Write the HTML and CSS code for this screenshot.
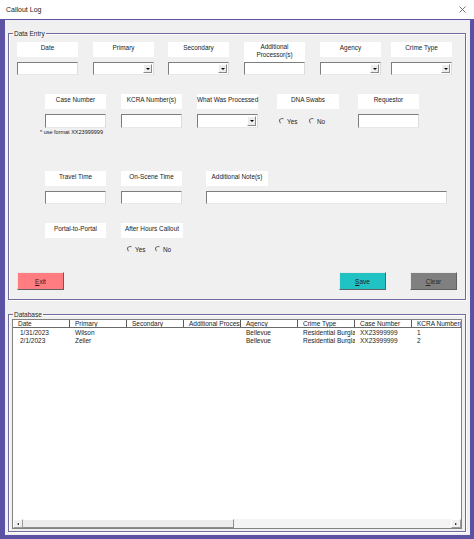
FILE: index.html
```html
<!DOCTYPE html>
<html lang="en">
<head>
<meta charset="utf-8">
<title>Callout Log</title>
<link rel="stylesheet" href="styles.css">
</head>
<body>
<div class="window">
  <div class="titlebar">
    <span class="title">Callout Log</span>
    <svg class="close" width="7" height="7" viewBox="0 0 7 7"><path d="M0.5 0.5L6.5 6.5M6.5 0.5L0.5 6.5" stroke="#555" stroke-width="0.8" fill="none"/></svg>
  </div>
  <div class="client">
    <fieldset class="frame entry">
      <legend>Data Entry</legend>

      <div class="row row1">
        <div class="field"><div class="lbl">Date</div><div class="txt"></div></div>
        <div class="field"><div class="lbl">Primary</div><div class="combo"><span class="drop"></span></div></div>
        <div class="field shift-l1"><div class="lbl">Secondary</div><div class="combo"><span class="drop"></span></div></div>
        <div class="field"><div class="lbl lbl2">Additional<br>Processor(s)</div><div class="txt"></div></div>
        <div class="field"><div class="lbl">Agency</div><div class="combo"><span class="drop"></span></div></div>
        <div class="field shift-l5"><div class="lbl">Crime Type</div><div class="combo"><span class="drop"></span></div></div>
      </div>

      <div class="row row2">
        <div class="field case">
          <div class="lbl">Case Number</div><div class="txt tall"></div>
          <div class="hint">* use format XX23999999</div>
        </div>
        <div class="field"><div class="lbl">KCRA Number(s)</div><div class="txt tall"></div></div>
        <div class="field"><div class="lbl">What Was Processed</div><div class="combo tall"><span class="drop"></span></div></div>
        <div class="field wide shift-r4">
          <div class="lbl">DNA Swabs</div>
          <div class="radios dna">
            <span class="opt"><span class="radio"></span>Yes</span>
            <span class="opt"><span class="radio"></span>No</span>
          </div>
        </div>
        <div class="field shift-r4"><div class="lbl">Requestor</div><div class="txt tall"></div></div>
      </div>

      <div class="row row3">
        <div class="field"><div class="lbl">Travel Time</div><div class="txt"></div></div>
        <div class="field"><div class="lbl">On-Scene Time</div><div class="txt"></div></div>
        <div class="field notes shift-r9"><div class="lbl">Additional Note(s)</div><div class="txt"></div></div>
      </div>

      <div class="row row4">
        <div class="field"><div class="lbl">Portal-to-Portal</div></div>
        <div class="field wide">
          <div class="lbl">After Hours Callout</div>
          <div class="radios after">
            <span class="opt"><span class="radio"></span>Yes</span>
            <span class="opt"><span class="radio"></span>No</span>
          </div>
        </div>
      </div>

      <div class="buttons">
        <button class="btn exit"><u>E</u>xit</button>
        <button class="btn save"><u>S</u>ave</button>
        <button class="btn clear"><u>C</u>lear</button>
      </div>
    </fieldset>

    <fieldset class="frame database">
      <legend>Database</legend>
      <div class="listbox">
        <div class="lrow head">
          <span class="cell first">Date</span>
          <span class="cell">Primary</span>
          <span class="cell">Secondary</span>
          <span class="cell">Additional Processor(s)</span>
          <span class="cell">Agency</span>
          <span class="cell">Crime Type</span>
          <span class="cell">Case Number</span>
          <span class="cell last">KCRA Number(s)</span>
        </div>
        <div class="rows">
          <div class="lrow">
            <span class="cell first">1/31/2023</span>
            <span class="cell">Wilson</span>
            <span class="cell"></span>
            <span class="cell"></span>
            <span class="cell">Bellevue</span>
            <span class="cell">Residential Burglary</span>
            <span class="cell">XX23999999</span>
            <span class="cell last">1</span>
          </div>
          <div class="lrow">
            <span class="cell first">2/1/2023</span>
            <span class="cell">Zeller</span>
            <span class="cell"></span>
            <span class="cell"></span>
            <span class="cell">Bellevue</span>
            <span class="cell">Residential Burglary</span>
            <span class="cell">XX23999999</span>
            <span class="cell last">2</span>
          </div>
        </div>
        <div class="hscroll">
          <span class="sbtn left"></span>
          <span class="thumb"></span>
          <span class="track"></span>
          <span class="sbtn right"></span>
        </div>
      </div>
    </fieldset>
  </div>
</div>
</body>
</html>
```

FILE: styles.css
```css
* { box-sizing: border-box; }
html, body { margin: 0; padding: 0; }
body {
  width: 474px;
  height: 539px;
  overflow: hidden;
  background: #ffffff;
  font-family: "Liberation Sans", Arial, sans-serif;
  color: #222;
}
.window { height: 539px; display: flex; flex-direction: column; }

.titlebar {
  height: 20px;
  flex: none;
  background: #ffffff;
  border-bottom: 1px solid #5a52a0;
  display: flex;
  align-items: center;
  justify-content: space-between;
  padding: 0 8px 0 6px;
}
.title { font-size: 7px; color: #222; }
.close { display: block; }

.client {
  flex: 1;
  display: flex;
  flex-direction: column;
  background: #f0f0f0;
  border-left: 5px solid #5b52a3;
  border-right: 4px solid #5b52a3;
  border-bottom: 4px solid #5b52a3;
}

.frame {
  margin: 0 4px 0 3px;
  padding: 0;
  min-width: 0;
  border: 1px solid #6f6b9c;
  box-shadow: inset 1px 1px 0 #ffffff, 1px 1px 0 #ffffff;
}
.frame legend {
  font-size: 6.5px;
  line-height: 9px;
  padding: 0 1px;
  margin-left: 4px;
  color: #222;
}
.entry { margin-top: 9px; padding-bottom: 9px; }
.database { margin-top: 10px; margin-bottom: 3px; flex: 1; display: flex; flex-direction: column; }

.row { display: flex; align-items: flex-start; gap: 15px; }
.row1 { margin-top: 4px; padding-left: 8px; }
.row2 { margin-top: 19px; padding-left: 36px; }
.row3 { margin-top: 34px; padding-left: 36px; }
.row4 { margin-top: 19px; padding-left: 36px; }

.field { width: 61px; display: flex; flex-direction: column; }
.row1 .field { height: 33px; justify-content: space-between; }
.field.wide { width: 62px; }
.field.notes { width: 241px; }
.field.notes .lbl { width: 62px; }
.shift-l1 { margin-left: -1px; }
.shift-l5 { margin-left: -5px; }
.shift-r4 { margin-left: 4px; }
.shift-r9 { margin-left: 9px; }

.lbl {
  height: 15px;
  background: #ffffff;
  font-size: 6.4px;
  line-height: 8px;
  padding-top: 2px;
  text-align: center;
  white-space: nowrap;
  color: #222;
}
.lbl.lbl2 { height: 20px; padding-top: 1px; }

.txt, .combo {
  height: 13px;
  background: #ffffff;
  border-top: 1px solid #7d7d7d;
  border-left: 1px solid #7d7d7d;
  border-right: 1px solid #dcdcdc;
  border-bottom: 1px solid #e8e8e8;
}
.row2 .txt, .row2 .combo, .row3 .txt { margin-top: 5px; }
.tall { height: 14px; }
.combo { display: flex; justify-content: flex-end; align-items: stretch; padding: 1px; }
.drop {
  width: 9px;
  background: #ececec;
  border-top: 1px solid #ffffff;
  border-left: 1px solid #ffffff;
  border-right: 1px solid #8a8a8a;
  border-bottom: 1px solid #8a8a8a;
  display: flex;
  align-items: center;
  justify-content: center;
}
.drop::after {
  content: "";
  width: 0;
  height: 0;
  border-left: 2px solid transparent;
  border-right: 2px solid transparent;
  border-top: 2px solid #000;
}

.hint {
  margin-left: -5px;
  margin-top: 1px;
  height: 8px;
  font-size: 5.5px;
  line-height: 7px;
  white-space: nowrap;
  color: #222;
}

.radios { display: flex; align-items: center; font-size: 6.4px; color: #222; }
.radios.dna { height: 14px; margin-top: 5px; padding-left: 2px; }
.radios.dna .opt { width: 37px; }
.radios.after { height: 8px; margin-top: 7px; padding-left: 6px; }
.radios.after .opt { width: 34px; }
.opt { display: flex; align-items: center; white-space: nowrap; }
.radio {
  width: 6px;
  height: 6px;
  margin-right: 2px;
  border-radius: 50%;
  border: 1px solid;
  border-color: #6a6a6a transparent transparent #6a6a6a;
  transform: rotate(-10deg);
}

.buttons { display: flex; gap: 24px; margin-top: 19px; padding: 0 8px; }
.btn {
  width: 47px;
  height: 18px;
  padding: 0;
  font-family: "Liberation Sans", Arial, sans-serif;
  font-size: 6.5px;
  color: #222;
  border-top: 1px solid #e9e9e9;
  border-left: 1px solid #e9e9e9;
  border-right: 1px solid #606060;
  border-bottom: 1px solid #606060;
}
.btn u { text-decoration-thickness: 0.5px; text-underline-offset: 1px; }
.exit { background: #ff7c80; color: #4a1414; }
.save { margin-left: auto; background: #20c2c4; }
.clear { background: #808080; color: #2a2a2a; }

.listbox {
  flex: 1;
  margin: 0 3px 2px;
  background: #ffffff;
  border: 1px solid #828282;
  display: flex;
  flex-direction: column;
  overflow: hidden;
  font-size: 6.5px;
  color: #222;
}
.lrow { display: flex; white-space: nowrap; }
.cell {
  flex: none;
  width: 57px;
  overflow: hidden;
  padding-left: 5px;
  line-height: 7.5px;
}
.cell.first { width: 57px; }
.rows .cell.first { padding-left: 7px; }
.cell.last { flex: 1; }
.head { height: 8px; border-bottom: 1px solid #6a6a6a; }
.head .cell { line-height: 7px; border-right: 1px solid #5a5a5a; }
.head .cell.last { border-right: none; }
.rows { flex: 1; padding-top: 1px; }

.hscroll { height: 9px; display: flex; background: #f4f4f4; }
.sbtn {
  width: 10px;
  background: #f0f0f0;
  border-right: 1px solid #9a9a9a;
  border-bottom: 1px solid #9a9a9a;
  border-top: 1px solid #ffffff;
  border-left: 1px solid #ffffff;
  display: flex;
  align-items: center;
  justify-content: center;
}
.sbtn.left::after {
  content: "";
  border-top: 1.5px solid transparent;
  border-bottom: 1.5px solid transparent;
  border-right: 2px solid #000;
}
.sbtn.right::after {
  content: "";
  border-top: 1.5px solid transparent;
  border-bottom: 1.5px solid transparent;
  border-left: 2px solid #000;
}
.thumb {
  width: 211px;
  background: #ececec;
  border-right: 1px solid #8c8c8c;
  border-bottom: 1px solid #8c8c8c;
  border-top: 1px solid #ffffff;
}
.track { flex: 1; }
```
